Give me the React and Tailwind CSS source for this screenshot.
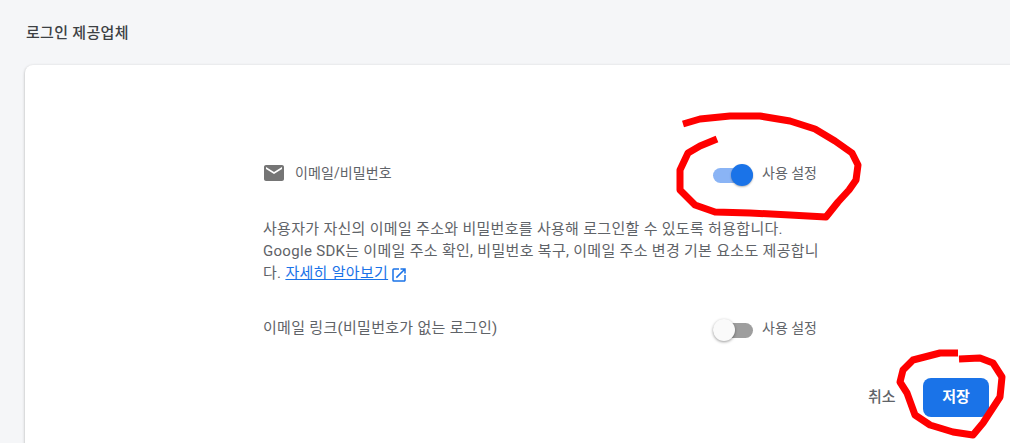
import React from "react";

const font = { fontFamily: '"Roboto","Noto Sans CJK KR",sans-serif' };

function Toggle({ on }) {
  return (
    <div className="relative w-[40px] h-[15px] shrink-0 mt-[4px]">
      <div className={on ? "w-full h-full rounded-full bg-[#8ab4f5]" : "w-full h-full rounded-full bg-[#9e9e9e]"} />
      {on ? (
        <div className="absolute right-0 top-[-4px] w-[22px] h-[22px] rounded-full bg-[#1a73e8] shadow-[0_1px_2px_rgba(0,0,0,0.3)]" />
      ) : (
        <div className="absolute left-0 top-[-4px] w-[22px] h-[22px] rounded-full bg-[#fafafa] shadow-[0_1px_3px_rgba(0,0,0,0.4)]" />
      )}
    </div>
  );
}

function ToggleLabel({ on }) {
  return (
    <div className="flex items-center gap-[9px] w-[104px] shrink-0">
      <Toggle on={on} />
      <span className="text-[14px] text-[#5f6368] whitespace-nowrap">사용 설정</span>
    </div>
  );
}

export default function App() {
  return (
    <div style={font} className="relative w-[1010px] h-[443px] overflow-hidden bg-[#f5f6f8]">
      <h2 className="pl-[26px] pt-[23px] h-[65px] text-[15px] tracking-[0.3px] leading-[20px] font-medium text-[#3c4043]">로그인 제공업체</h2>
      <div className="ml-[25px] w-[1100px] h-[500px] rounded-[8px] bg-white shadow-[0_1px_3px_rgba(0,0,0,0.3)] pt-[97px] pl-[238px]">
        <div className="w-[570px]">
          <div className="flex items-center justify-between h-[22px] w-[554px]">
            <div className="flex items-center gap-[9px] ml-[-1px] mt-[1px]">
              <svg width="24" height="24" viewBox="0 0 24 24" className="fill-[#757575] mt-[-1px]">
                <path d="M20 4H4c-1.100 0-2 .9-2 2v12c0 1.100.9 2 2 2h16c1.100 0 2-.9 2-2V6c0-1.100-.9-2-2-2zm0 4l-8 5-8-5V6l8 5 8-5v2z" />
              </svg>
              <span className="text-[14px] tracking-[0.1px] text-[#5f6368]">이메일/비밀번호</span>
            </div>
            <ToggleLabel on />
          </div>
          <p className="mt-[34px] text-[15px] tracking-[0.3px] leading-[22px] text-[#5f6368] w-[580px] whitespace-nowrap">
            사용자가 자신의 이메일 주소와 비밀번호를 사용해 로그인할 수 있도록 허용합니다.
            <br />
            Google SDK는 이메일 주소 확인, 비밀번호 복구, 이메일 주소 변경 기본 요소도 제공합니
            <br />
            다. <span className="text-[#1a73e8] underline">자세히 알아보기</span>
            <svg width="18" height="18" viewBox="0 0 24 24" className="inline-block ml-[2px] mb-[-2px] fill-[#1a73e8]">
              <path d="M19 19H5V5h7V3H5a2 2 0 0 0-2 2v14a2 2 0 0 0 2 2h14c1.100 0 2-.9 2-2v-7h-2v7zM14 3v2h3.590l-9.830 9.830 1.410 1.410L19 6.410V10h2V3h-7z" />
            </svg>
          </p>
          <div className="flex items-center justify-between h-[22px] mt-[33px] w-[554px]">
            <span className="text-[15px] tracking-[0.3px] text-[#5f6368]">이메일 링크(비밀번호가 없는 로그인)</span>
            <ToggleLabel on={false} />
          </div>
        </div>
        <div className="flex items-center w-[760px] mt-[39px]">
          <span className="ml-[605px] text-[15px] font-medium text-[#5f6368] whitespace-nowrap w-[27px]">취소</span>
          <button className="ml-[28px] w-[66px] h-[39px] rounded-[8px] bg-[#1a73e8] text-[15px] font-bold text-white">저장</button>
        </div>
      </div>
      <svg className="absolute left-0 top-0 pointer-events-none" width="1010" height="443" fill="none" stroke="#ff0000" strokeWidth="7" strokeLinejoin="round">
        <path d="M683 124L700 119L730 116L760 116L790 121L815 129L835 141L852 153L858 165L856 180L849 190L838 202L826 217L790 215L750 213L715 212L695 205L680 190L680 170L688 153L700 146L717 139" />
        <path d="M958 353L940 353L913 360L903 370L900 382L907 393L915 415L930 425L953 432L973 435L983 423L1000 397L1002 377L993 363L980 358L959 359" />
      </svg>
    </div>
  );
}
